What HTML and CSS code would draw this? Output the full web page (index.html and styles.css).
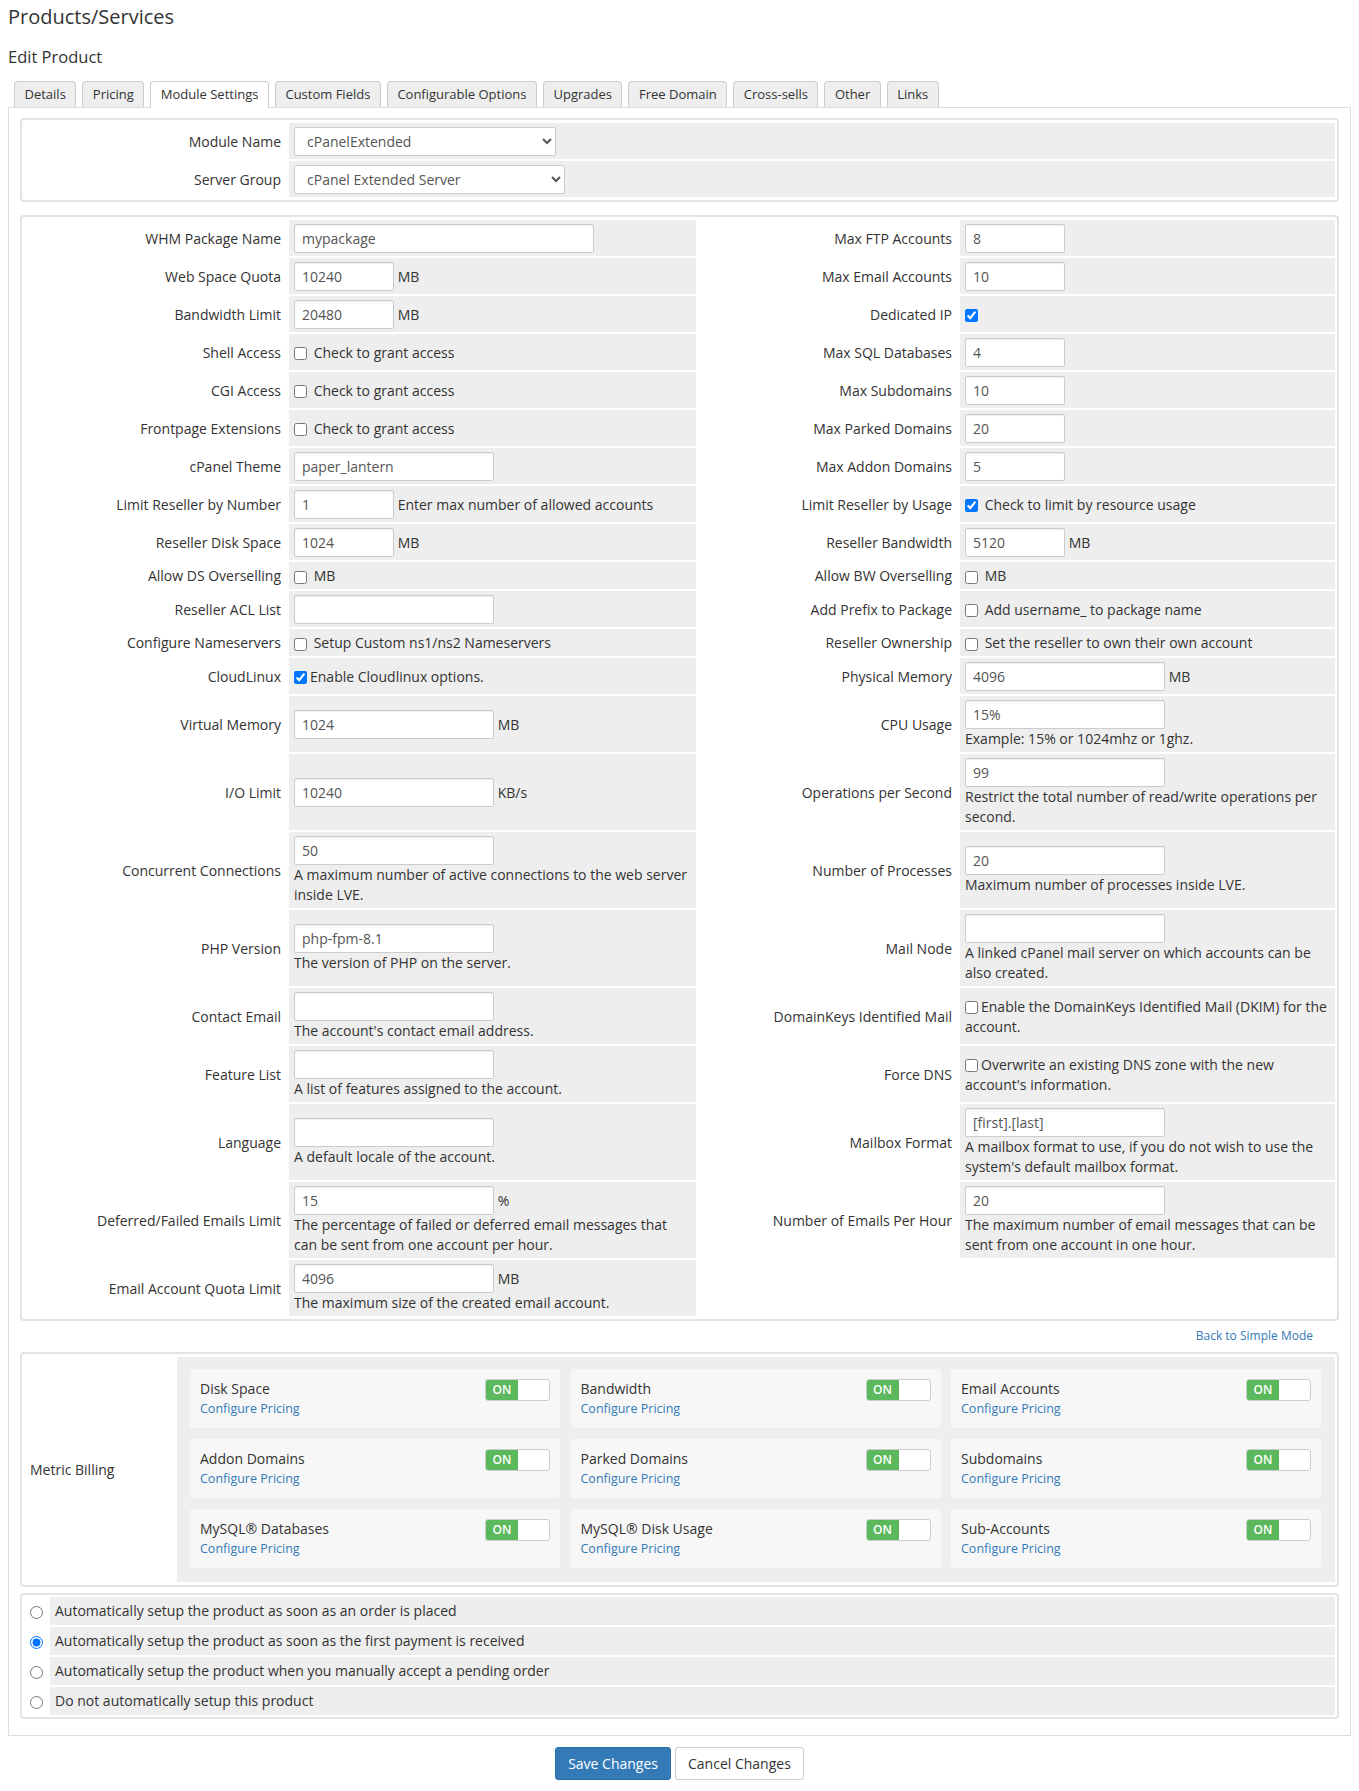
FILE: index.html
```html
<!DOCTYPE html>
<html lang="en">
<head>
<meta charset="utf-8">
<title>Products/Services - Edit Product</title>
<link rel="stylesheet" href="styles.css">
</head>
<body>
<h1 class="page-title">Products/Services</h1>
<h2 class="page-subtitle">Edit Product</h2>

<ul class="tabs">
  <li class="tab">Details</li>
  <li class="tab">Pricing</li>
  <li class="tab active">Module Settings</li>
  <li class="tab">Custom Fields</li>
  <li class="tab">Configurable Options</li>
  <li class="tab">Upgrades</li>
  <li class="tab">Free Domain</li>
  <li class="tab">Cross-sells</li>
  <li class="tab">Other</li>
  <li class="tab">Links</li>
</ul>

<div class="tab-content">
  <div class="box box-module">
    <table class="form">
      <colgroup><col class="c-label"><col></colgroup>
      <tr>
        <td class="fieldlabel">Module Name</td>
        <td class="fieldarea"><select class="select sel-module"><option>cPanelExtended</option></select></td>
      </tr>
      <tr>
        <td class="fieldlabel">Server Group</td>
        <td class="fieldarea"><select class="select sel-group"><option>cPanel Extended Server</option></select></td>
      </tr>
    </table>
  </div>

  <div class="box box-config">
    <table class="form">
      <colgroup><col class="c-label"><col class="c-field"><col class="c-label2"><col></colgroup>
      <tr>
        <td class="fieldlabel">WHM Package Name</td>
        <td class="fieldarea"><input class="input w300" type="text" value="mypackage"></td>
        <td class="fieldlabel">Max FTP Accounts</td>
        <td class="fieldarea"><input class="input w100" type="text" value="8"></td>
      </tr>
      <tr>
        <td class="fieldlabel">Web Space Quota</td>
        <td class="fieldarea"><input class="input w100" type="text" value="10240"> MB</td>
        <td class="fieldlabel">Max Email Accounts</td>
        <td class="fieldarea"><input class="input w100" type="text" value="10"></td>
      </tr>
      <tr>
        <td class="fieldlabel">Bandwidth Limit</td>
        <td class="fieldarea"><input class="input w100" type="text" value="20480"> MB</td>
        <td class="fieldlabel">Dedicated IP</td>
        <td class="fieldarea"><input class="check" type="checkbox" checked></td>
      </tr>
      <tr>
        <td class="fieldlabel">Shell Access</td>
        <td class="fieldarea"><label><input class="check" type="checkbox"> Check to grant access</label></td>
        <td class="fieldlabel">Max SQL Databases</td>
        <td class="fieldarea"><input class="input w100" type="text" value="4"></td>
      </tr>
      <tr>
        <td class="fieldlabel">CGI Access</td>
        <td class="fieldarea"><label><input class="check" type="checkbox"> Check to grant access</label></td>
        <td class="fieldlabel">Max Subdomains</td>
        <td class="fieldarea"><input class="input w100" type="text" value="10"></td>
      </tr>
      <tr>
        <td class="fieldlabel">Frontpage Extensions</td>
        <td class="fieldarea"><label><input class="check" type="checkbox"> Check to grant access</label></td>
        <td class="fieldlabel">Max Parked Domains</td>
        <td class="fieldarea"><input class="input w100" type="text" value="20"></td>
      </tr>
      <tr>
        <td class="fieldlabel">cPanel Theme</td>
        <td class="fieldarea"><input class="input w200" type="text" value="paper_lantern"></td>
        <td class="fieldlabel">Max Addon Domains</td>
        <td class="fieldarea"><input class="input w100" type="text" value="5"></td>
      </tr>
      <tr>
        <td class="fieldlabel">Limit Reseller by Number</td>
        <td class="fieldarea"><input class="input w100" type="text" value="1"> Enter max number of allowed accounts</td>
        <td class="fieldlabel">Limit Reseller by Usage</td>
        <td class="fieldarea"><label><input class="check" type="checkbox" checked> Check to limit by resource usage</label></td>
      </tr>
      <tr>
        <td class="fieldlabel">Reseller Disk Space</td>
        <td class="fieldarea"><input class="input w100" type="text" value="1024"> MB</td>
        <td class="fieldlabel">Reseller Bandwidth</td>
        <td class="fieldarea"><input class="input w100" type="text" value="5120"> MB</td>
      </tr>
      <tr>
        <td class="fieldlabel">Allow DS Overselling</td>
        <td class="fieldarea"><label><input class="check" type="checkbox"> MB</label></td>
        <td class="fieldlabel">Allow BW Overselling</td>
        <td class="fieldarea"><label><input class="check" type="checkbox"> MB</label></td>
      </tr>
      <tr>
        <td class="fieldlabel">Reseller ACL List</td>
        <td class="fieldarea"><input class="input w200" type="text" value=""></td>
        <td class="fieldlabel">Add Prefix to Package</td>
        <td class="fieldarea"><label><input class="check" type="checkbox"> Add username_ to package name</label></td>
      </tr>
      <tr>
        <td class="fieldlabel">Configure Nameservers</td>
        <td class="fieldarea"><label><input class="check" type="checkbox"> Setup Custom ns1/ns2 Nameservers</label></td>
        <td class="fieldlabel">Reseller Ownership</td>
        <td class="fieldarea"><label><input class="check" type="checkbox"> Set the reseller to own their own account</label></td>
      </tr>
      <tr>
        <td class="fieldlabel">CloudLinux</td>
        <td class="fieldarea"><label><input class="check" type="checkbox" checked>Enable Cloudlinux options.</label></td>
        <td class="fieldlabel">Physical Memory</td>
        <td class="fieldarea"><input class="input w200" type="text" value="4096"> MB</td>
      </tr>
      <tr>
        <td class="fieldlabel">Virtual Memory</td>
        <td class="fieldarea"><input class="input w200" type="text" value="1024"> MB</td>
        <td class="fieldlabel">CPU Usage</td>
        <td class="fieldarea"><input class="input w200" type="text" value="15%"><div class="help">Example: 15% or 1024mhz or 1ghz.</div></td>
      </tr>
      <tr>
        <td class="fieldlabel">I/O Limit</td>
        <td class="fieldarea"><input class="input w200" type="text" value="10240"> KB/s</td>
        <td class="fieldlabel">Operations per Second</td>
        <td class="fieldarea"><input class="input w200" type="text" value="99"><div class="help">Restrict the total number of read/write operations per second.</div></td>
      </tr>
      <tr>
        <td class="fieldlabel">Concurrent Connections</td>
        <td class="fieldarea"><input class="input w200" type="text" value="50"><div class="help">A maximum number of active connections to the web server inside LVE.</div></td>
        <td class="fieldlabel">Number of Processes</td>
        <td class="fieldarea"><input class="input w200" type="text" value="20"><div class="help">Maximum number of processes inside LVE.</div></td>
      </tr>
      <tr>
        <td class="fieldlabel">PHP Version</td>
        <td class="fieldarea"><input class="input w200" type="text" value="php-fpm-8.1"><div class="help">The version of PHP on the server.</div></td>
        <td class="fieldlabel">Mail Node</td>
        <td class="fieldarea"><input class="input w200" type="text" value=""><div class="help">A linked cPanel mail server on which accounts can be also created.</div></td>
      </tr>
      <tr>
        <td class="fieldlabel">Contact Email</td>
        <td class="fieldarea"><input class="input w200" type="text" value=""><div class="help">The account's contact email address.</div></td>
        <td class="fieldlabel">DomainKeys Identified Mail</td>
        <td class="fieldarea"><label><input class="check" type="checkbox">Enable the DomainKeys Identified Mail (DKIM) for the account.</label></td>
      </tr>
      <tr>
        <td class="fieldlabel">Feature List</td>
        <td class="fieldarea"><input class="input w200" type="text" value=""><div class="help">A list of features assigned to the account.</div></td>
        <td class="fieldlabel">Force DNS</td>
        <td class="fieldarea"><label><input class="check" type="checkbox">Overwrite an existing DNS zone with the new account's information.</label></td>
      </tr>
      <tr>
        <td class="fieldlabel">Language</td>
        <td class="fieldarea"><input class="input w200" type="text" value=""><div class="help">A default locale of the account.</div></td>
        <td class="fieldlabel">Mailbox Format</td>
        <td class="fieldarea"><input class="input w200" type="text" value="[first].[last]"><div class="help">A mailbox format to use, if you do not wish to use the system's default mailbox format.</div></td>
      </tr>
      <tr>
        <td class="fieldlabel">Deferred/Failed Emails Limit</td>
        <td class="fieldarea"><input class="input w200" type="text" value="15"> %<div class="help">The percentage of failed or deferred email messages that can be sent from one account per hour.</div></td>
        <td class="fieldlabel">Number of Emails Per Hour</td>
        <td class="fieldarea"><input class="input w200" type="text" value="20"><div class="help">The maximum number of email messages that can be sent from one account in one hour.</div></td>
      </tr>
      <tr>
        <td class="fieldlabel">Email Account Quota Limit</td>
        <td class="fieldarea"><input class="input w200" type="text" value="4096"> MB<div class="help">The maximum size of the created email account.</div></td>
        <td class="empty" colspan="2"></td>
      </tr>
    </table>
  </div>

  <div class="simple-mode"><a href="#">Back to Simple Mode</a></div>

  <div class="box box-metric">
    <table class="form">
      <colgroup><col class="c-metric"><col></colgroup>
      <tr>
        <td class="fieldlabel metric-label">Metric Billing</td>
        <td class="fieldarea metric-area">
          <div class="metrics">
            <div class="metric"><div><div class="metric-name">Disk Space</div><a class="metric-link" href="#">Configure Pricing</a></div><span class="toggle"><span class="toggle-on">ON</span></span></div>
            <div class="metric"><div><div class="metric-name">Bandwidth</div><a class="metric-link" href="#">Configure Pricing</a></div><span class="toggle"><span class="toggle-on">ON</span></span></div>
            <div class="metric"><div><div class="metric-name">Email Accounts</div><a class="metric-link" href="#">Configure Pricing</a></div><span class="toggle"><span class="toggle-on">ON</span></span></div>
            <div class="metric"><div><div class="metric-name">Addon Domains</div><a class="metric-link" href="#">Configure Pricing</a></div><span class="toggle"><span class="toggle-on">ON</span></span></div>
            <div class="metric"><div><div class="metric-name">Parked Domains</div><a class="metric-link" href="#">Configure Pricing</a></div><span class="toggle"><span class="toggle-on">ON</span></span></div>
            <div class="metric"><div><div class="metric-name">Subdomains</div><a class="metric-link" href="#">Configure Pricing</a></div><span class="toggle"><span class="toggle-on">ON</span></span></div>
            <div class="metric"><div><div class="metric-name">MySQL® Databases</div><a class="metric-link" href="#">Configure Pricing</a></div><span class="toggle"><span class="toggle-on">ON</span></span></div>
            <div class="metric"><div><div class="metric-name">MySQL® Disk Usage</div><a class="metric-link" href="#">Configure Pricing</a></div><span class="toggle"><span class="toggle-on">ON</span></span></div>
            <div class="metric"><div><div class="metric-name">Sub-Accounts</div><a class="metric-link" href="#">Configure Pricing</a></div><span class="toggle"><span class="toggle-on">ON</span></span></div>
          </div>
        </td>
      </tr>
    </table>
  </div>

  <div class="box box-radios">
    <table class="form">
      <colgroup><col class="c-radio"><col></colgroup>
      <tr>
        <td class="radio-cell"><input class="radio" type="radio" name="autosetup"></td>
        <td class="fieldarea radio-text">Automatically setup the product as soon as an order is placed</td>
      </tr>
      <tr>
        <td class="radio-cell"><input class="radio" type="radio" name="autosetup" checked></td>
        <td class="fieldarea radio-text">Automatically setup the product as soon as the first payment is received</td>
      </tr>
      <tr>
        <td class="radio-cell"><input class="radio" type="radio" name="autosetup"></td>
        <td class="fieldarea radio-text">Automatically setup the product when you manually accept a pending order</td>
      </tr>
      <tr>
        <td class="radio-cell"><input class="radio" type="radio" name="autosetup"></td>
        <td class="fieldarea radio-text">Do not automatically setup this product</td>
      </tr>
    </table>
  </div>
</div>

<div class="actions">
  <button class="btn btn-primary" type="button">Save Changes</button>
  <button class="btn btn-default" type="button">Cancel Changes</button>
</div>
</body>
</html>
```

FILE: styles.css
```css
* {
  box-sizing: border-box;
}

body {
  margin: 0 8px 8px;
  background: #fff;
  color: #333;
  font-family: "Open Sans", "Liberation Sans", Arial, sans-serif;
  font-size: 14px;
  line-height: 20px;
}

.page-title {
  margin: 6px 0 0;
  font-size: 20px;
  font-weight: normal;
  line-height: 22px;
  color: #333;
}

.page-subtitle {
  margin: 19px 0 0;
  font-size: 16.5px;
  font-weight: normal;
  line-height: 20px;
  color: #333;
}

/* tabs */
.tabs {
  display: flex;
  align-items: flex-end;
  gap: 6px;
  margin: 14px 0 0;
  padding: 0 0 0 6px;
  list-style: none;
}

.tab {
  height: 26px;
  padding: 0 9.5px;
  border: 1px solid #ccc;
  border-bottom: 0;
  border-radius: 4px 4px 0 0;
  background: #eee;
  color: #333;
  font-size: 13px;
  line-height: 25px;
  white-space: nowrap;
}

.tab.active {
  position: relative;
  height: 27px;
  margin-bottom: -1px;
  background: #fff;
}

.tab-content {
  border: 1px solid #ddd;
  padding: 10px 11px 16px;
}

/* boxed tables */
.box {
  border: 2px solid #e0e4e7;
  border-radius: 4px;
  padding: 1px 0;
}

.box-module {
  margin-bottom: 13px;
}

.box-radios {
  margin-top: 6px;
  padding: 0;
}

.form {
  width: 100%;
  border-spacing: 2px;
  table-layout: fixed;
}

.c-label {
  width: 263px;
}

.c-field {
  width: 407px;
}

.c-label2 {
  width: 260px;
}

.c-metric {
  width: 151px;
}

.c-radio {
  width: 24px;
}

.form td {
  padding: 4px 4px 3px 5px;
  vertical-align: middle;
}

.form td.fieldlabel {
  padding-right: 6px;
  text-align: right;
  background: #fff;
}

.form td.fieldarea {
  background: #eee;
}

.form td.empty {
  background: #fff;
}

.help {
  line-height: 20px;
}

/* controls */
.input {
  height: 29px;
  padding: 0 7px;
  border: 1px solid #ccc;
  border-radius: 2px;
  background: #fff;
  box-shadow: inset 0 1px 1px rgba(0, 0, 0, 0.075);
  color: #555;
  font-family: inherit;
  font-size: 14px;
  vertical-align: baseline;
}

.w100 {
  width: 100px;
}

.w200 {
  width: 200px;
}

.w300 {
  width: 300px;
}

.select {
  height: 29px;
  padding: 0 8px 0 8px;
  border: 1px solid #ccc;
  border-radius: 2px;
  background-color: #fff;
  color: #555;
  font-family: inherit;
  font-size: 14px;
  vertical-align: baseline;
}

.sel-module {
  width: 262px;
}

.sel-group {
  width: 271px;
}

.check {
  width: 13px;
  height: 13px;
  margin: 0 3px 0 0;
  vertical-align: middle;
}

.radio {
  width: 13px;
  height: 13px;
  margin: 0;
  vertical-align: middle;
}

/* simple mode link */
.simple-mode {
  margin: 6px 0 7px;
  padding-right: 26px;
  font-size: 12px;
  line-height: 18px;
  text-align: right;
}

.simple-mode a,
.metric-link {
  color: #337ab7;
  text-decoration: none;
}

/* metric billing */
.form td.metric-label {
  padding-left: 6px;
  text-align: left;
}

.form td.metric-area {
  padding: 12px 14px 14px 13px;
}

.metrics {
  display: grid;
  grid-template-columns: repeat(3, 1fr);
  column-gap: 10.5px;
  row-gap: 11px;
}

.metric {
  display: flex;
  justify-content: space-between;
  align-items: flex-start;
  height: 59px;
  padding: 10px 10px 9px;
  border-radius: 3px;
  background: #f7f7f7;
}

.metric-name {
  line-height: 20px;
}

.metric-link {
  display: block;
  font-size: 12.5px;
  line-height: 20px;
}

.toggle {
  display: flex;
  flex: none;
  width: 65px;
  height: 22px;
  overflow: hidden;
  border: 1px solid #ccc;
  border-radius: 3px;
  background: #fff;
}

.toggle-on {
  width: 32px;
  background: #5cb85c;
  color: #fff;
  font-size: 12px;
  font-weight: 600;
  line-height: 20px;
  text-align: center;
}

/* radios */
.form td.radio-cell {
  padding: 0;
  text-align: center;
  background: #fff;
}

.form td.radio-text {
  height: 28px;
  padding: 4px 5px 4px 5px;
}

/* buttons */
.actions {
  display: flex;
  justify-content: center;
  gap: 4px;
  margin-top: 11px;
}

.btn {
  height: 33px;
  padding: 0 12px;
  border: 1px solid #ccc;
  border-radius: 3px;
  font-family: inherit;
  font-size: 14px;
  line-height: 31px;
}

.btn-primary {
  border-color: #2e6da4;
  background: #337ab7;
  color: #fff;
}

.btn-default {
  background: #fff;
  color: #333;
}
```
